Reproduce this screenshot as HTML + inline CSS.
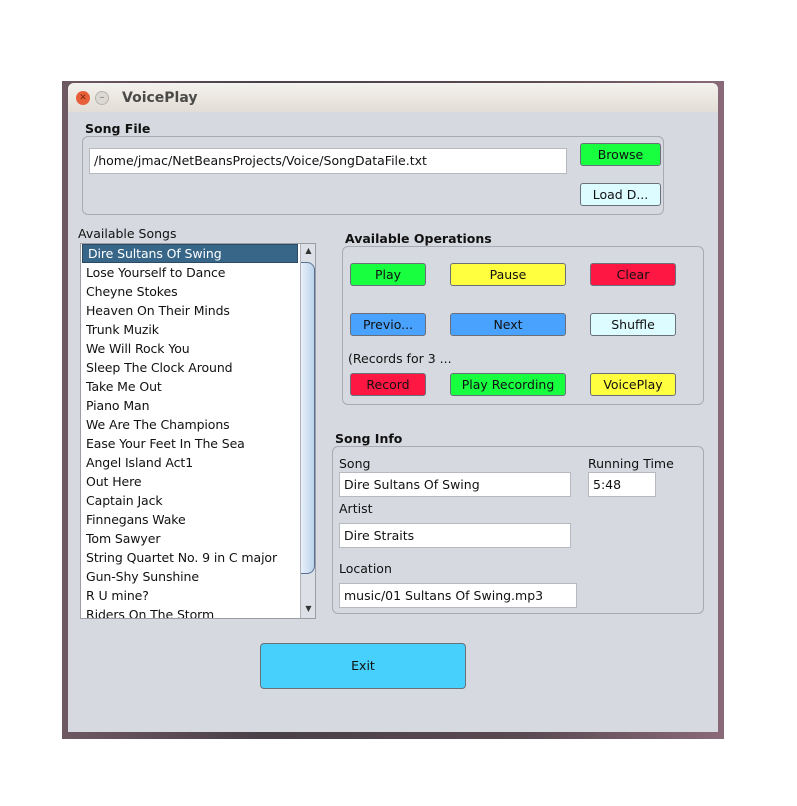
<!DOCTYPE html>
<html><head><style>
body{margin:0;width:797px;height:806px;background:#fff;position:relative;font-family:"DejaVu Sans","Liberation Sans",sans-serif;font-size:12.5px;color:#111;overflow:hidden}
.abs{position:absolute}
#bg{left:62px;top:81px;width:662px;height:658px;background:linear-gradient(90deg,#6e5862,#4a4048 30%,#5a4a52 70%,#8a6a78)}
#win{left:68px;top:83px;width:650px;height:649px;background:#d6d9e0;border-radius:6px 6px 0 0;overflow:hidden}
#title{left:0;top:0;width:650px;height:29px;background:linear-gradient(#f4f2ee,#e2ddd5)}
.bold{font-weight:bold}
.grp{border:1px solid #a8abb2;border-radius:6px;box-sizing:border-box}
.btn{border:1px solid #6a707a;border-radius:3px;box-sizing:border-box;text-align:center;line-height:21px;font-size:12.5px}
.tf{background:#fff;border:1px solid #b6b9c0;box-sizing:border-box;padding-left:4px;line-height:23px;white-space:nowrap;overflow:hidden}
.li{height:19px;line-height:19px;padding-left:5px;white-space:nowrap;letter-spacing:-0.1px}
</style></head><body>
<div id="bg" class="abs"></div>
<div id="win" class="abs">
 <div id="title" class="abs"></div>
 <div class="abs" style="left:8px;top:8px;width:14px;height:14px;border-radius:50%;background:#e8603a;color:#7a2a10;font-size:9px;text-align:center;line-height:14px">✕</div>
 <div class="abs" style="left:27px;top:8px;width:14px;height:14px;border-radius:50%;background:#dcd8d2;border:1px solid #b8b4ae;box-sizing:border-box;color:#777;font-size:10px;text-align:center;line-height:11px">–</div>
 <div class="abs bold" style="left:54px;top:7px;font-size:14px;color:#4a4a48">VoicePlay</div>
</div>
<div class="abs bold" style="left:85px;top:121px">Song File</div>
<div class="abs grp" style="left:82px;top:136px;width:582px;height:79px"></div>
<div class="abs tf" style="left:89px;top:148px;width:478px;height:26px">/home/jmac/NetBeansProjects/Voice/SongDataFile.txt</div>
<div class="abs btn" style="left:580px;top:143px;width:81px;height:23px;background:#18ff40">Browse</div>
<div class="abs btn" style="left:580px;top:183px;width:81px;height:23px;background:#dcfcff">Load D...</div>

<div class="abs" style="left:78px;top:226px">Available Songs</div>
<div class="abs" style="left:80px;top:243px;width:236px;height:376px;border:1px solid #9a9da4;box-sizing:border-box;background:#fff;overflow:hidden">
 <div style="position:absolute;left:0;top:0;width:218px">
 <div class="li" style="background:#386688;color:#fff;border:1px solid #2a4a66;height:17px;line-height:17px;margin:0 1px 0 1px">Dire Sultans Of Swing</div>
 <div class="li">Lose Yourself to Dance</div><div class="li">Cheyne Stokes</div><div class="li">Heaven On Their Minds</div><div class="li">Trunk Muzik</div><div class="li">We Will Rock You</div><div class="li">Sleep The Clock Around</div><div class="li">Take Me Out</div><div class="li">Piano Man</div><div class="li">We Are The Champions</div><div class="li">Ease Your Feet In The Sea</div><div class="li">Angel Island Act1</div><div class="li">Out Here</div><div class="li">Captain Jack</div><div class="li">Finnegans Wake</div><div class="li">Tom Sawyer</div><div class="li">String Quartet No. 9 in C major</div><div class="li">Gun-Shy Sunshine</div><div class="li">R U mine?</div><div class="li">Riders On The Storm</div>
 </div>
 <div style="position:absolute;left:219px;top:0;width:15px;height:374px;background:#dde0e6;border-left:1px solid #b0b3ba">
  <div style="position:absolute;top:2px;width:15px;text-align:center;font-size:8px;color:#333">▲</div>
  <div style="position:absolute;top:18px;left:0;width:14px;height:312px;background:linear-gradient(90deg,#e8f0fa,#bcd4ec);border:1px solid #5a7090;border-left:none;border-radius:0 8px 8px 0;box-sizing:border-box"></div>
  <div style="position:absolute;top:360px;width:15px;text-align:center;font-size:8px;color:#333">▼</div>
 </div>
</div>

<div class="abs bold" style="left:345px;top:231px">Available Operations</div>
<div class="abs grp" style="left:342px;top:246px;width:362px;height:159px"></div>
<div class="abs btn" style="left:350px;top:263px;width:76px;height:23px;background:#18ff40">Play</div>
<div class="abs btn" style="left:450px;top:263px;width:116px;height:23px;background:#ffff40">Pause</div>
<div class="abs btn" style="left:590px;top:263px;width:86px;height:23px;background:#ff1744">Clear</div>
<div class="abs btn" style="left:350px;top:313px;width:76px;height:23px;background:#4aa2ff">Previo...</div>
<div class="abs btn" style="left:450px;top:313px;width:116px;height:23px;background:#4aa2ff">Next</div>
<div class="abs btn" style="left:590px;top:313px;width:86px;height:23px;background:#dcfcff">Shuffle</div>
<div class="abs" style="left:348px;top:351px">(Records for 3 ...</div>
<div class="abs btn" style="left:350px;top:373px;width:76px;height:23px;background:#ff1744">Record</div>
<div class="abs btn" style="left:450px;top:373px;width:116px;height:23px;background:#18ff40">Play Recording</div>
<div class="abs btn" style="left:590px;top:373px;width:86px;height:23px;background:#ffff40">VoicePlay</div>

<div class="abs bold" style="left:335px;top:431px">Song Info</div>
<div class="abs grp" style="left:332px;top:446px;width:372px;height:168px"></div>
<div class="abs" style="left:339px;top:456px">Song</div>
<div class="abs" style="left:588px;top:456px">Running Time</div>
<div class="abs tf" style="left:339px;top:472px;width:232px;height:25px">Dire Sultans Of Swing</div>
<div class="abs tf" style="left:588px;top:472px;width:68px;height:25px">5:48</div>
<div class="abs" style="left:339px;top:501px">Artist</div>
<div class="abs tf" style="left:339px;top:523px;width:232px;height:25px">Dire Straits</div>
<div class="abs" style="left:339px;top:561px">Location</div>
<div class="abs tf" style="left:339px;top:583px;width:238px;height:25px">music/01 Sultans Of Swing.mp3</div>

<div class="abs btn" style="left:260px;top:643px;width:206px;height:46px;line-height:44px;background:#48d0fc;border-radius:4px">Exit</div>
</body></html>
